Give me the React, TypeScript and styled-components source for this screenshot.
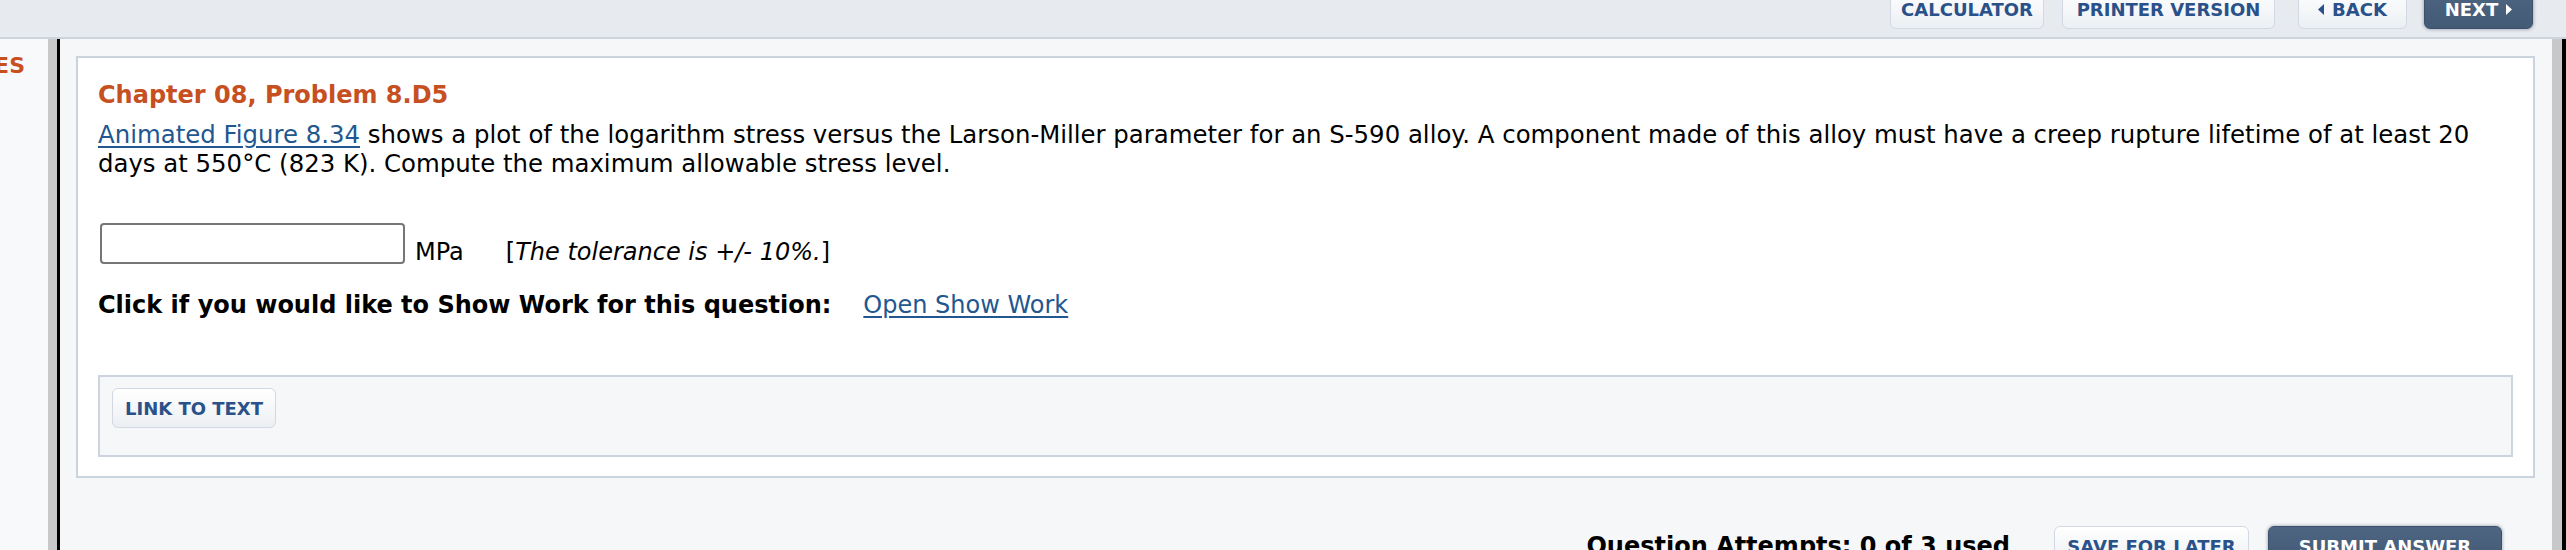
import React from "react";
import styled, { createGlobalStyle } from "styled-components";

const GlobalStyle = createGlobalStyle`
  html, body { margin: 0; padding: 0; }
  body {
    font-family: Verdana, "DejaVu Sans", sans-serif;
    background: #f6f7f9;
    color: #000;
  }
  #root { height: 550px; }
`;

const Page = styled.div`
  display: flex;
  flex-direction: column;
  height: 550px;
  overflow: hidden;
`;

const TopBar = styled.div`
  height: 39px;
  flex: none;
  box-sizing: border-box;
  background: #e7eaef;
  border-bottom: 2px solid #cdd4de;
  display: flex;
  justify-content: flex-end;
  align-items: flex-end;
  padding: 0 33px 8px 0;
  overflow: hidden;
`;

const NavButton = styled.button<{ $dark?: boolean; $gap?: number; $w?: number }>`
  height: 40px;
  width: ${(p) => (p.$w ? `${p.$w}px` : "auto")};
  flex: none;
  box-sizing: border-box;
  margin-left: ${(p) => p.$gap ?? 0}px;
  padding: 0 12px;
  display: flex;
  align-items: center;
  justify-content: center;
  gap: 8px;
  font-family: Verdana, "DejaVu Sans", sans-serif;
  font-weight: bold;
  font-size: 18px;
  border-radius: 6px;
  cursor: pointer;
  color: ${(p) => (p.$dark ? "#ffffff" : "#2a5189")};
  background: ${(p) =>
    p.$dark
      ? "linear-gradient(#4d6582, #435a75)"
      : "linear-gradient(#ffffff, #eceff3)"};
  border: 1.5px solid ${(p) => (p.$dark ? "#3c516b" : "#d3d9e2")};
  box-shadow: ${(p) => (p.$dark ? "0 0 3px 1px rgba(60,80,110,0.35)" : "none")};
  white-space: nowrap;
`;

const Arrow = styled.svg`
  width: 6px;
  height: 11px;
  flex: none;
`;

const Body = styled.div`
  flex: 1;
  display: flex;
  min-height: 0;
`;

const SideNav = styled.div`
  width: 57px;
  flex: none;
  box-sizing: border-box;
  background: #f8f9fb;
  border-right: 9px solid #c8c8c8;
  overflow: hidden;
  display: flex;
  justify-content: flex-end;
  padding: 12px 23px 0 0;
`;

const SideLabel = styled.div`
  font-weight: bold;
  font-size: 22px;
  line-height: 29px;
  color: #c8501f;
  white-space: nowrap;
  height: 29px;
`;

const Main = styled.div`
  flex: 1;
  min-width: 0;
  border-left: 3px solid #000;
  background: #f6f7f9;
  padding: 17px 17px 0 16px;
  display: flex;
  flex-direction: column;
`;

const RightEdge = styled.div`
  width: 10px;
  flex: none;
  background: #c8c8c8;
  border-right: 4px solid #000;
`;

const Card = styled.section`
  background: #ffffff;
  border: 2px solid #cbd3de;
  padding: 23px 20px 19px 20px;
`;

const Title = styled.h2`
  margin: 0;
  font-size: 24px;
  line-height: 29px;
  font-weight: bold;
  color: #c6501f;
`;

const Question = styled.p`
  margin: 10px 0 0 0;
  font-size: 24.4px;
  line-height: 29px;
`;

const TextLink = styled.a`
  color: #22578f;
  text-decoration: underline;
  text-underline-offset: 3px;
  text-decoration-thickness: 2px;
  cursor: pointer;
`;

const AnswerRow = styled.div`
  margin-top: 45px;
  display: flex;
  align-items: flex-end;
  font-size: 24px;
  line-height: 29px;
`;

const AnswerInput = styled.input`
  width: 305px;
  height: 41px;
  box-sizing: border-box;
  margin: 0 10px 3px 2px;
  border: 2px solid #767676;
  border-radius: 4px;
  background: #fff;
  font-size: 22px;
  padding: 0 6px;
`;

const Unit = styled.span`
  margin-right: 42px;
`;

const Tolerance = styled.span`
  em { font-style: italic; }
`;

const ShowWorkRow = styled.div`
  margin-top: 24px;
  display: flex;
  align-items: baseline;
  gap: 32px;
  font-size: 24px;
  line-height: 29px;
`;

const ShowWorkLabel = styled.strong`
  font-weight: bold;
`;

const LinkPanel = styled.div`
  margin-top: 55px;
  height: 82px;
  box-sizing: border-box;
  background: #f6f7f9;
  border: 2px solid #cdd4df;
  padding: 11px 12px;
`;

const Footer = styled.div`
  display: flex;
  justify-content: flex-end;
  align-items: flex-start;
  padding: 48px 33px 0 0;
`;

const Attempts = styled.div`
  font-size: 24px;
  line-height: 29px;
  font-weight: bold;
  margin: 6px 44px 0 0;
  white-space: nowrap;
`;

const LeftTri = () => (
  <Arrow viewBox="0 0 6 11">
    <path d="M6 0 L0 5.5 L6 11 Z" fill="currentColor" />
  </Arrow>
);

const RightTri = () => (
  <Arrow viewBox="0 0 6 11">
    <path d="M0 0 L6 5.5 L0 11 Z" fill="currentColor" />
  </Arrow>
);

export default function App() {
  return (
    <Page>
      <GlobalStyle />
      <TopBar>
        <NavButton $w={154}>CALCULATOR</NavButton>
        <NavButton $w={213} $gap={18}>PRINTER VERSION</NavButton>
        <NavButton $w={109} $gap={23}>
          <LeftTri />
          BACK
        </NavButton>
        <NavButton $w={109} $gap={17} $dark>
          NEXT
          <RightTri />
        </NavButton>
      </TopBar>
      <Body>
        <SideNav>
          <SideLabel>RESOURCES</SideLabel>
        </SideNav>
        <Main>
          <Card>
            <Title>Chapter 08, Problem 8.D5</Title>
            <Question>
              <TextLink>Animated Figure 8.34</TextLink> shows a plot of the logarithm
              stress versus the Larson-Miller parameter for an S-590 alloy. A component
              made of this alloy must have a creep rupture lifetime of at least 20 days
              at 550°C (823 K). Compute the maximum allowable stress level.
            </Question>
            <AnswerRow>
              <AnswerInput type="text" aria-label="answer" />
              <Unit>MPa</Unit>
              <Tolerance>
                [<em>The tolerance is +/- 10%.</em>]
              </Tolerance>
            </AnswerRow>
            <ShowWorkRow>
              <ShowWorkLabel>Click if you would like to Show Work for this question:</ShowWorkLabel>
              <TextLink>Open Show Work</TextLink>
            </ShowWorkRow>
            <LinkPanel>
              <NavButton $w={164}>LINK TO TEXT</NavButton>
            </LinkPanel>
          </Card>
          <Footer>
            <Attempts>Question Attempts: 0 of 3 used</Attempts>
            <NavButton $w={195}>SAVE FOR LATER</NavButton>
            <NavButton $w={234} $gap={19} $dark>
              SUBMIT ANSWER
            </NavButton>
          </Footer>
        </Main>
        <RightEdge />
      </Body>
    </Page>
  );
}
